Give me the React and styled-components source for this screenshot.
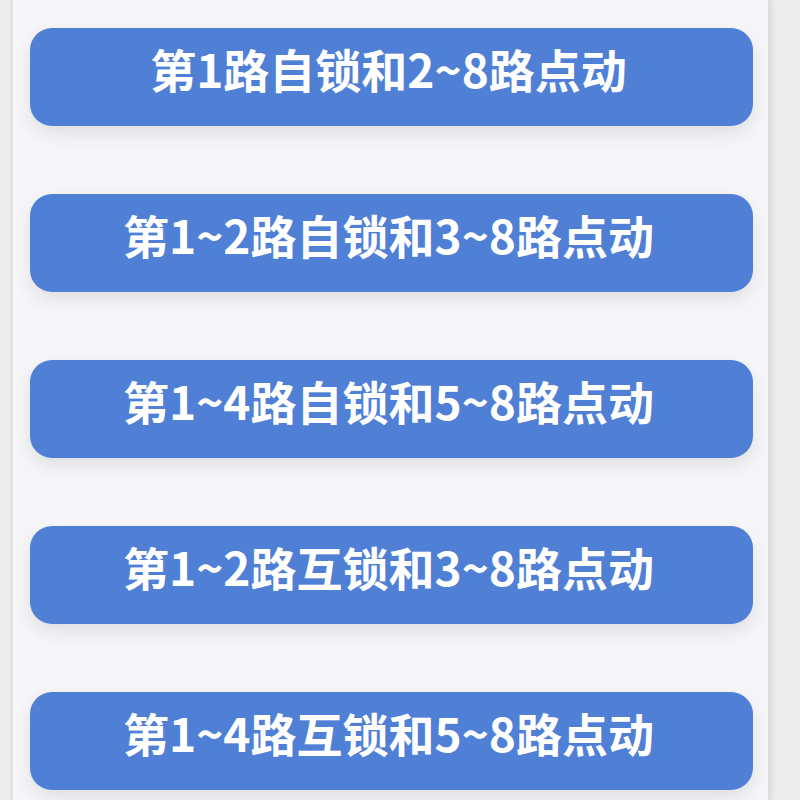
import React from "react";
import styled, { createGlobalStyle } from "styled-components";

const GlobalStyle = createGlobalStyle`
  html, body {
    margin: 0;
    padding: 0;
    background: #efeff0;
  }
  body {
    font-family: "Noto Sans CJK SC", "Noto Sans", sans-serif;
  }
`;

const Page = styled.div`
  display: flex;
  width: 800px;
  height: 800px;
  overflow: hidden;
  background: #efeff0;
`;

const SideRail = styled.div`
  flex: 0 0 ${({ $width }) => $width}px;
  background: #ededee;
  box-shadow: ${({ $inset }) => $inset};
`;

const Panel = styled.div`
  flex: 1;
  display: flex;
  flex-direction: column;
  gap: 68px;
  padding: 28px 15px 0 17px;
  background: #f6f6f8;
  border-left: 1px solid #e4e4e6;
  box-shadow: 2px 0 8px rgba(0, 0, 0, 0.06);
  position: relative;
  z-index: 1;
`;

const ModeButton = styled.button`
  flex: 0 0 98px;
  display: flex;
  align-items: center;
  justify-content: center;
  padding: 0 6px 18px 0;
  border: none;
  border-radius: 22px;
  background: #4f80d6;
  color: #ffffff;
  font-family: "Noto Sans CJK SC", "Noto Sans", sans-serif;
  font-size: 46px;
  font-weight: 700;
  line-height: 1;
  box-shadow: 0 8px 18px rgba(0, 0, 0, 0.09);
  cursor: pointer;
`;

const modes = [
  "第1路自锁和2~8路点动",
  "第1~2路自锁和3~8路点动",
  "第1~4路自锁和5~8路点动",
  "第1~2路互锁和3~8路点动",
  "第1~4路互锁和5~8路点动",
];

export default function App() {
  return (
    <>
      <GlobalStyle />
      <Page>
        <SideRail $width={12} $inset="inset -1px 0 0 #e2e2e4" />
        <Panel>
          {modes.map((label) => (
            <ModeButton key={label}>{label}</ModeButton>
          ))}
        </Panel>
        <SideRail $width={32} $inset="inset 8px 0 10px -6px rgba(0,0,0,0.06)" />
      </Page>
    </>
  );
}
